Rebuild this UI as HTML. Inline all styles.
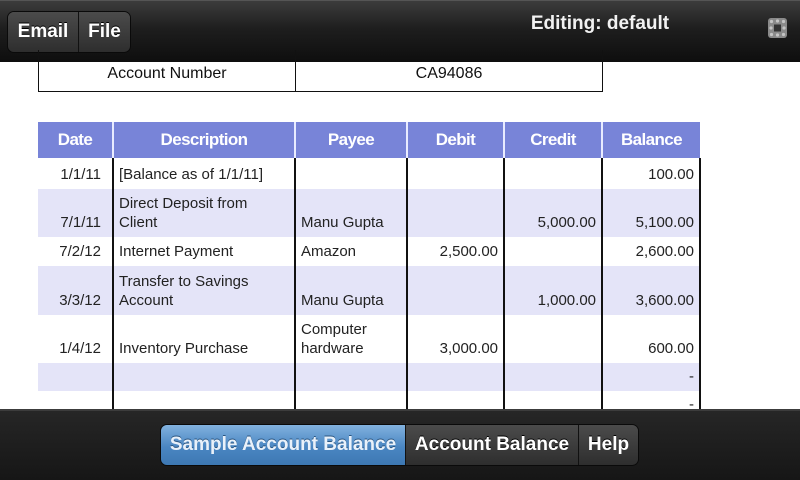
<!DOCTYPE html>
<html><head><meta charset="utf-8"><style>
*{margin:0;padding:0;box-sizing:border-box}
body{width:800px;height:480px;overflow:hidden;background:#fff;font-family:"Liberation Sans",Arial,sans-serif;position:relative}
.top{position:absolute;left:0;top:0;width:800px;height:62px;background:linear-gradient(#3c3c3c,#1e1e1e 45%,#0e0e0e);border-top:1px solid #555}
.seg{position:absolute;display:flex;border:1px solid #0a0a0a;border-radius:7px;overflow:hidden;box-shadow:inset 0 1px 0 rgba(255,255,255,.18)}
.seg div{color:#fff;font-weight:bold;font-size:19px;display:flex;align-items:center;justify-content:center;background:linear-gradient(#4b4b4b,#2e2e2e);text-shadow:0 -1px 0 #000}
.seg div+div{border-left:1px solid #111}
.title{position:absolute;left:520px;top:13px;width:160px;text-align:center;color:#f2f2f2;font-weight:bold;font-size:19px}
.acct{position:absolute;left:38px;top:50px;width:565px;height:42px;border:1px solid #111;border-top:none;display:flex}
.acct div{display:flex;align-items:flex-end;justify-content:center;padding-bottom:8px;font-size:16px;color:#111}
table{position:absolute;left:38px;top:122px;border-collapse:collapse;table-layout:fixed;width:662px;font-size:15px;color:#222}
th{background:#7884d8;color:#fff;font-size:17px;letter-spacing:-0.6px;font-weight:bold;height:36px;border-left:2px solid #e8ebff;text-align:center}
th:first-child{border-left:none}
td{vertical-align:bottom;padding:0 5px 5px 5px;line-height:19px;border-left:2px solid #111}
td:first-child{border-left:none;text-align:right;padding-right:11px}
td:last-child{border-right:2px solid #111}
td.r{text-align:right}
tr.l td{background:#e4e4f8}
.foot{position:absolute;left:0;top:409px;width:800px;height:71px;background:linear-gradient(#262626,#161616);border-top:2px solid #3c3c3c}
.blue{background:linear-gradient(#82b2df,#4a86c2 55%,#3d78b3)!important;color:#e9f1fa!important;text-shadow:0 -1px 0 #2a5580!important}
</style></head><body>
<div class="top"></div>
<div class="seg" style="left:7px;top:11px;height:42px"><div style="width:70px">Email</div><div style="width:52px">File</div></div>
<div class="title">Editing: default</div>
<svg style="position:absolute;left:767px;top:17px" width="21" height="22" viewBox="0 0 21 22"><rect x="1" y="1" width="19" height="20" rx="3" fill="#8a8a8a"/><rect x="7" y="7.5" width="7" height="7" fill="#333"/><g fill="#c4c4c4"><circle cx="4.5" cy="4.5" r="1.6"/><circle cx="10.5" cy="4" r="1.6"/><circle cx="16.5" cy="4.5" r="1.6"/><circle cx="4" cy="11" r="1.6"/><circle cx="17" cy="11" r="1.6"/><circle cx="4.5" cy="17.5" r="1.6"/><circle cx="10.5" cy="18" r="1.6"/><circle cx="16.5" cy="17.5" r="1.6"/></g></svg>
<div class="acct"><div style="width:257px;border-right:1px solid #111">Account Number</div><div style="width:306px">CA94086</div></div>
<table>
<colgroup><col style="width:75px"><col style="width:182px"><col style="width:112px"><col style="width:97px"><col style="width:98px"><col style="width:98px"></colgroup>
<tr><th>Date</th><th>Description</th><th>Payee</th><th>Debit</th><th>Credit</th><th>Balance</th></tr>
<tr style="height:31px"><td>1/1/11</td><td>[Balance as of 1/1/11]</td><td></td><td></td><td></td><td class="r">100.00</td></tr>
<tr class="l" style="height:48px"><td>7/1/11</td><td>Direct Deposit from Client</td><td>Manu Gupta</td><td></td><td class="r">5,000.00</td><td class="r">5,100.00</td></tr>
<tr style="height:29px"><td>7/2/12</td><td>Internet Payment</td><td>Amazon</td><td class="r">2,500.00</td><td></td><td class="r">2,600.00</td></tr>
<tr class="l" style="height:49px"><td>3/3/12</td><td>Transfer to Savings Account</td><td>Manu Gupta</td><td></td><td class="r">1,000.00</td><td class="r">3,600.00</td></tr>
<tr style="height:48px"><td>1/4/12</td><td>Inventory Purchase</td><td>Computer hardware</td><td class="r">3,000.00</td><td></td><td class="r">600.00</td></tr>
<tr class="l" style="height:28px"><td></td><td></td><td></td><td></td><td></td><td class="r">-</td></tr>
<tr style="height:28px"><td></td><td></td><td></td><td></td><td></td><td class="r">-</td></tr>
</table>
<div class="foot"></div>
<div class="seg" style="left:160px;top:424px;height:42px"><div class="blue" style="width:244px">Sample Account Balance</div><div style="width:173px">Account Balance</div><div style="width:60px">Help</div></div>
</body></html>
